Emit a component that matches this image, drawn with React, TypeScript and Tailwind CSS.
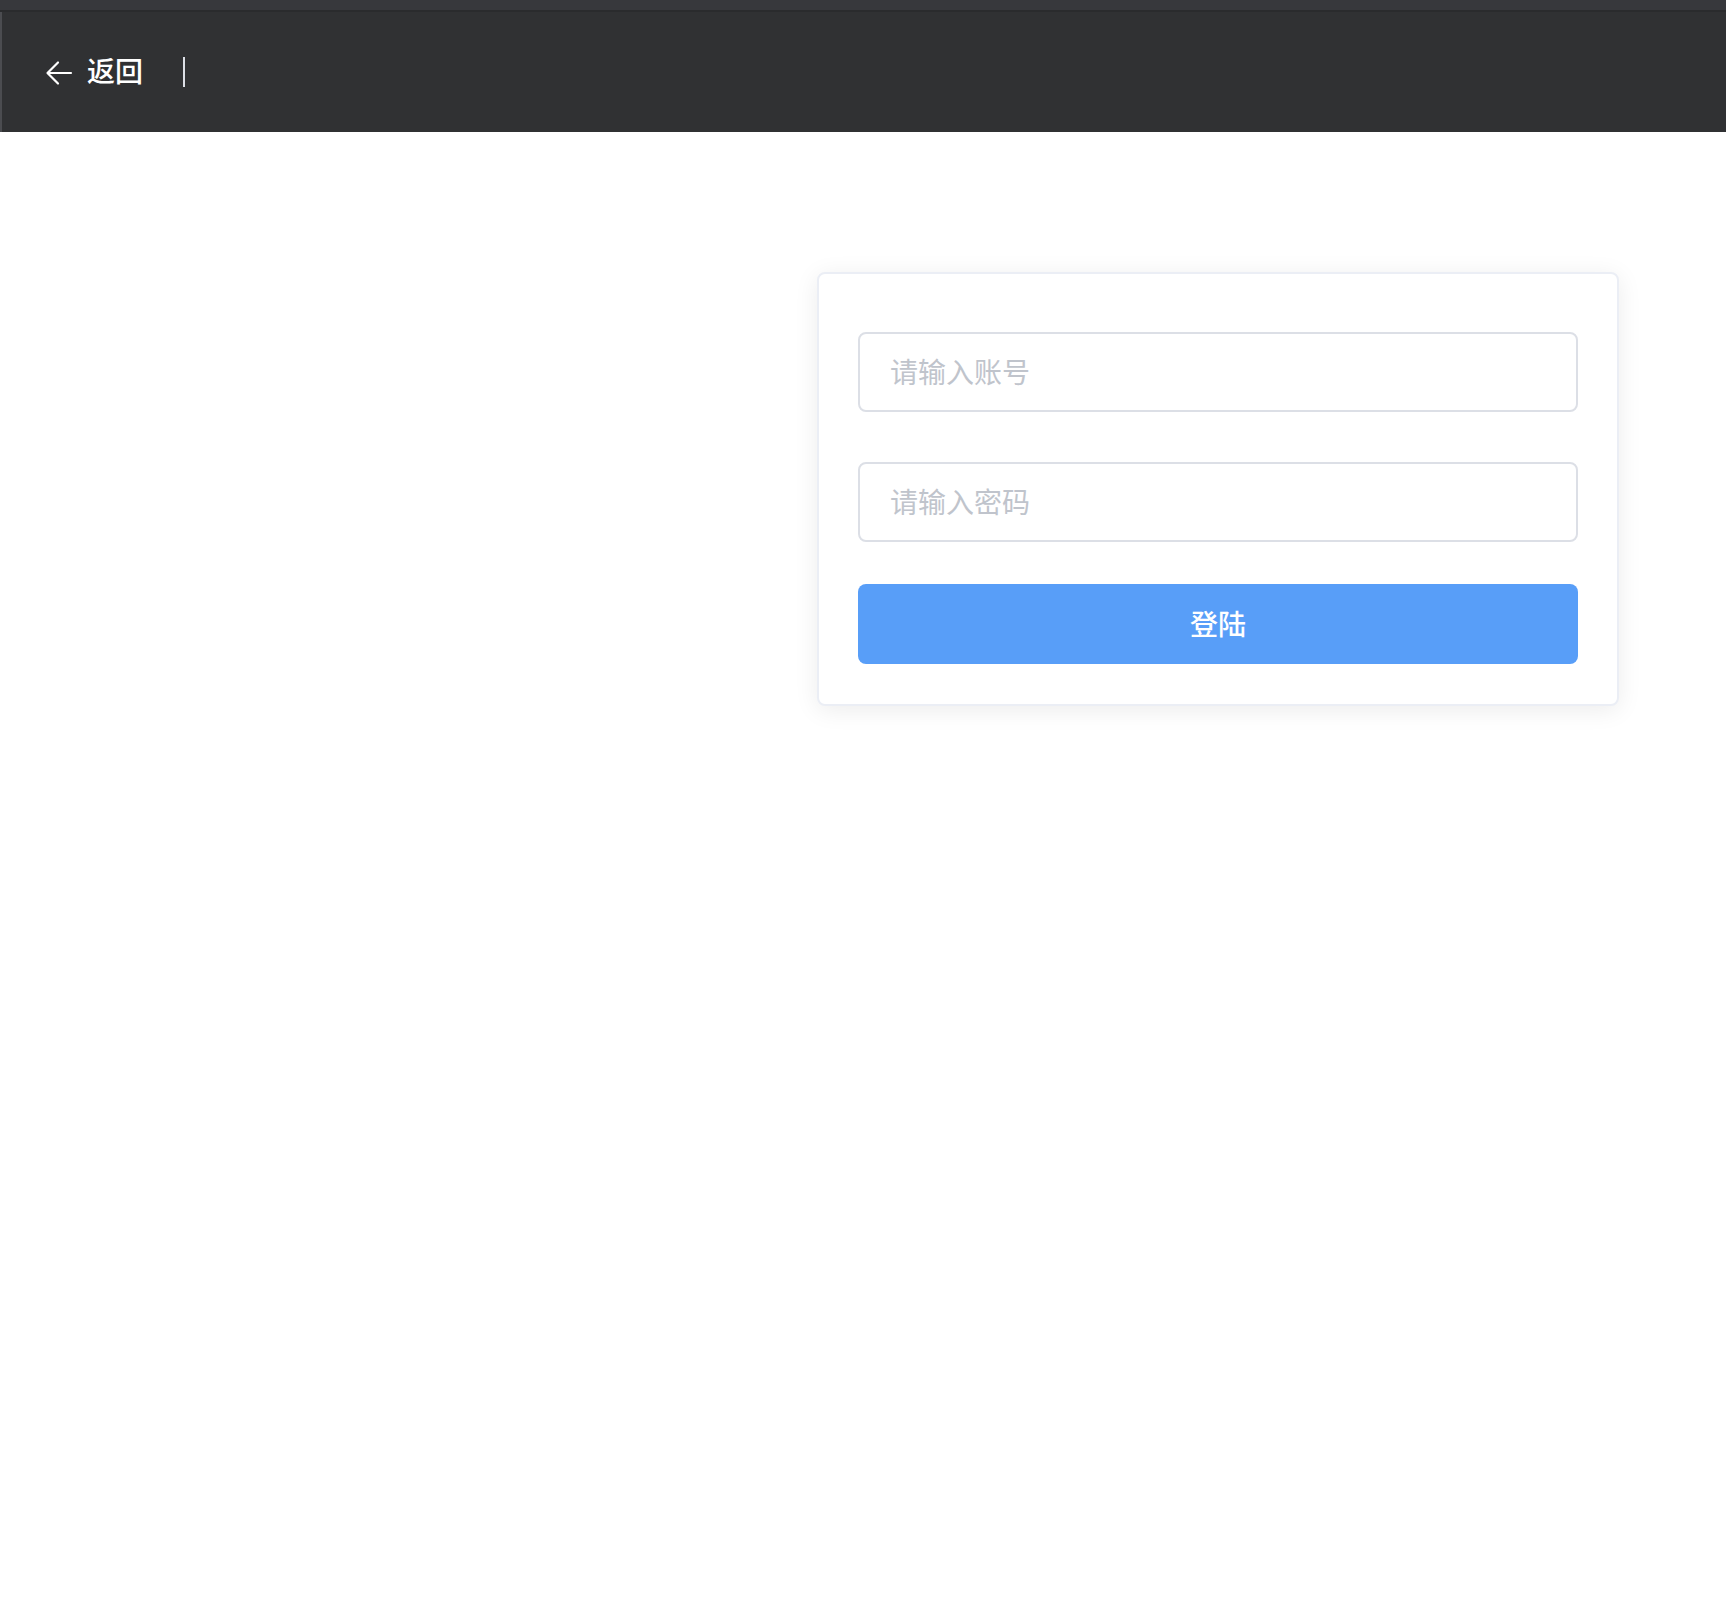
import React from "react";

export default function App() {
  return (
    <div className="min-h-[1624px] w-full bg-white font-['Noto_Sans_CJK_SC','Noto_Sans',sans-serif]">
      <div className="h-[10px] w-full bg-[#37383c]" />
      <div className="h-[2px] w-full bg-[#2a2b2d]" />
      <header className="flex h-[120px] items-center border-l-2 border-[#4b4c50] bg-[#303133] text-white">
        <div className="flex items-center pl-[42px]">
          <svg width="30" height="26" viewBox="0 0 30 26" fill="none" className="mt-[1px]">
            <path d="M27 13H4M14 2.5L3.5 13L14 23.5" stroke="#ffffff" strokeWidth="2.2" strokeLinecap="round" strokeLinejoin="round" />
          </svg>
          <span className="ml-[13px] mt-[-5px] text-[28px] font-medium leading-none">返回</span>
          <div className="ml-[40px] h-[30px] w-[2px] bg-[#dcdfe6]" />
        </div>
      </header>
      <div className="flex justify-end pr-[107px] pt-[140px]">
        <div className="w-[802px] rounded-[8px] border-2 border-[#ebeef5] bg-white px-[39px] pb-[40px] pt-[58px] shadow-[0_4px_24px_0_rgba(0,0,0,0.08)]">
          <input
            className="block h-[80px] w-full rounded-[8px] border-2 border-[#dcdfe6] bg-white px-[30px] pb-[2px] text-[28px] text-[#606266] outline-none placeholder:text-[#c0c4cc]"
            placeholder="请输入账号"
          />
          <input
            type="password"
            className="mt-[50px] block h-[80px] w-full rounded-[8px] border-2 border-[#dcdfe6] bg-white px-[30px] pb-[2px] text-[28px] text-[#606266] outline-none placeholder:text-[#c0c4cc]"
            placeholder="请输入密码"
          />
          <button className="mt-[42px] flex h-[80px] w-full items-center justify-center rounded-[8px] bg-[#589ef8] pb-[2px] text-[28px] font-medium text-white">
            登陆
          </button>
        </div>
      </div>
    </div>
  );
}
